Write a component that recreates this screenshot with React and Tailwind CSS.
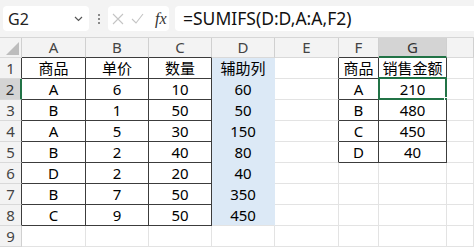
import React from 'react'

const cols = ['A', 'B', 'C', 'D', 'E', 'F', 'G', '']

const rows = [
  ['商品', '单价', '数量', '辅助列', '', '商品', '销售金额', ''],
  ['A', '6', '10', '60', '', 'A', '210', ''],
  ['B', '1', '50', '50', '', 'B', '480', ''],
  ['A', '5', '30', '150', '', 'C', '450', ''],
  ['B', '2', '40', '80', '', 'D', '40', ''],
  ['D', '2', '20', '40', '', '', '', ''],
  ['B', '7', '50', '350', '', '', '', ''],
  ['C', '9', '50', '450', '', '', '', ''],
  ['', '', '', '', '', '', '', ''],
]

const inTable = (r, c) => (r <= 8 && c <= 2) || (r <= 5 && (c === 5 || c === 6))

const cellClass = (r, c) => {
  const blue = c === 3 && r <= 8
  const right = inTable(r, c) || (c === 4 && r <= 5)
    ? 'border-r-[#3c3c3c]'
    : blue ? 'border-r-[#dce9f6]' : 'border-r-[#e3e3e3]'
  const bottom = inTable(r, c)
    ? 'border-b-[#3c3c3c]'
    : blue && r < 8 ? 'border-b-[#dce9f6]' : 'border-b-[#e3e3e3]'
  return `relative flex items-center justify-center border-r border-b ${right} ${bottom} ${blue ? 'bg-[#dce9f6]' : 'bg-white'}`
}

const rowHeadClass = (r) => {
  if (r === 2) return 'flex items-center justify-center border-b border-b-[#d9d9d9] border-r-2 border-r-[#217346] bg-[#d4d4d4] text-[#333]'
  if (r <= 8) return 'flex items-center justify-center border-b border-b-[#d9d9d9] border-r border-r-[#3c3c3c] bg-[#f3f3f3] text-[#444]'
  return 'flex items-center justify-center border-b border-b-[#d9d9d9] border-r border-r-[#d0d0d0] bg-[#f3f3f3] text-[#444]'
}

const colHeadClass = (c) => {
  if (c === 6) return 'flex items-center justify-center border-r border-r-[#d0d0d0] border-b-2 border-b-[#217346] bg-[#d4d4d4] text-[#333]'
  if (c <= 2 || c === 5) return 'flex items-center justify-center border-r border-r-[#d0d0d0] border-b border-b-[#3c3c3c] bg-[#f3f3f3] text-[#444]'
  return 'flex items-center justify-center border-r border-r-[#d0d0d0] border-b border-b-[#d9d9d9] bg-[#f3f3f3] text-[#444]'
}

export default function App() {
  return (
    <div className="w-[474px] h-[248px] overflow-hidden bg-white text-black" style={{ fontFamily: '"Noto Sans", "Noto Sans CJK SC", sans-serif' }}>
      {/* formula bar */}
      <div className="h-[38px] bg-[#f3f3f3] border-b border-[#d6d6d6] flex items-center pl-[3px]">
        <div className="w-[86px] h-[25px] bg-white rounded-[4px] flex items-center justify-between pl-[5px] pr-[6px]">
          <span className="text-[16px] leading-none text-[#222]">G2</span>
          <svg width="9" height="6" viewBox="0 0 9 6" fill="none" stroke="#555" strokeWidth="1.2">
            <path d="M1 1l3.5 3.5L8 1" />
          </svg>
        </div>
        <div className="w-[19px] flex flex-col items-center gap-[2px]">
          <span className="w-[2px] h-[2px] bg-[#666] rounded-full" />
          <span className="w-[2px] h-[2px] bg-[#666] rounded-full" />
          <span className="w-[2px] h-[2px] bg-[#666] rounded-full" />
        </div>
        <div className="w-[61px] h-[25px] bg-white rounded-[4px] flex items-center pl-[4px] gap-[7px]">
          <svg width="12" height="12" viewBox="0 0 12 12" fill="none" stroke="#c4c4c4" strokeWidth="1.1">
            <path d="M1 1l10 10M11 1L1 11" />
          </svg>
          <svg width="13" height="11" viewBox="0 0 13 11" fill="none" stroke="#c4c4c4" strokeWidth="1.1">
            <path d="M1 6l4 4 7-9" />
          </svg>
          <span className="text-[16px] leading-none italic text-[#333] ml-[4px]" style={{ fontFamily: '"Liberation Serif", serif' }}>fx</span>
        </div>
        <div className="flex-1 h-[25px] bg-white rounded-l-[4px] ml-[6px] flex items-center pl-[8px]">
          <span className="text-[17.5px] leading-none text-[#111]">=SUMIFS(D:D,A:A,F2)</span>
        </div>
      </div>

      {/* sheet grid */}
      <div className="grid grid-cols-[22px_64px_63px_63px_63px_64px_40px_68px_1fr] grid-rows-[20px_repeat(9,21px)] text-[15px] leading-none">
        <div className="relative bg-[#f3f3f3] border-r border-r-[#d0d0d0] border-b border-b-[#d9d9d9]">
          <svg className="absolute right-[2px] bottom-[2px]" width="13" height="13" viewBox="0 0 13 13">
            <path d="M13 0V13H0Z" fill="#bdbdbd" />
          </svg>
        </div>
        {cols.map((col, c) => (
          <div key={c} className={colHeadClass(c)}>{col}</div>
        ))}
        {rows.map((row, i) => {
          const r = i + 1
          return (
            <React.Fragment key={r}>
              <div className={rowHeadClass(r)}>{r}</div>
              {row.map((v, c) => (
                <div key={c} className={cellClass(r, c)}>
                  {v}
                  {r === 2 && c === 6 && (
                    <div className="absolute -top-[2px] -left-px -right-px -bottom-px border-2 border-[#217346]">
                      <span className="absolute -right-[4px] -bottom-[4px] w-[5px] h-[5px] bg-[#217346] border border-white" />
                    </div>
                  )}
                </div>
              ))}
            </React.Fragment>
          )
        })}
      </div>
    </div>
  )
}
